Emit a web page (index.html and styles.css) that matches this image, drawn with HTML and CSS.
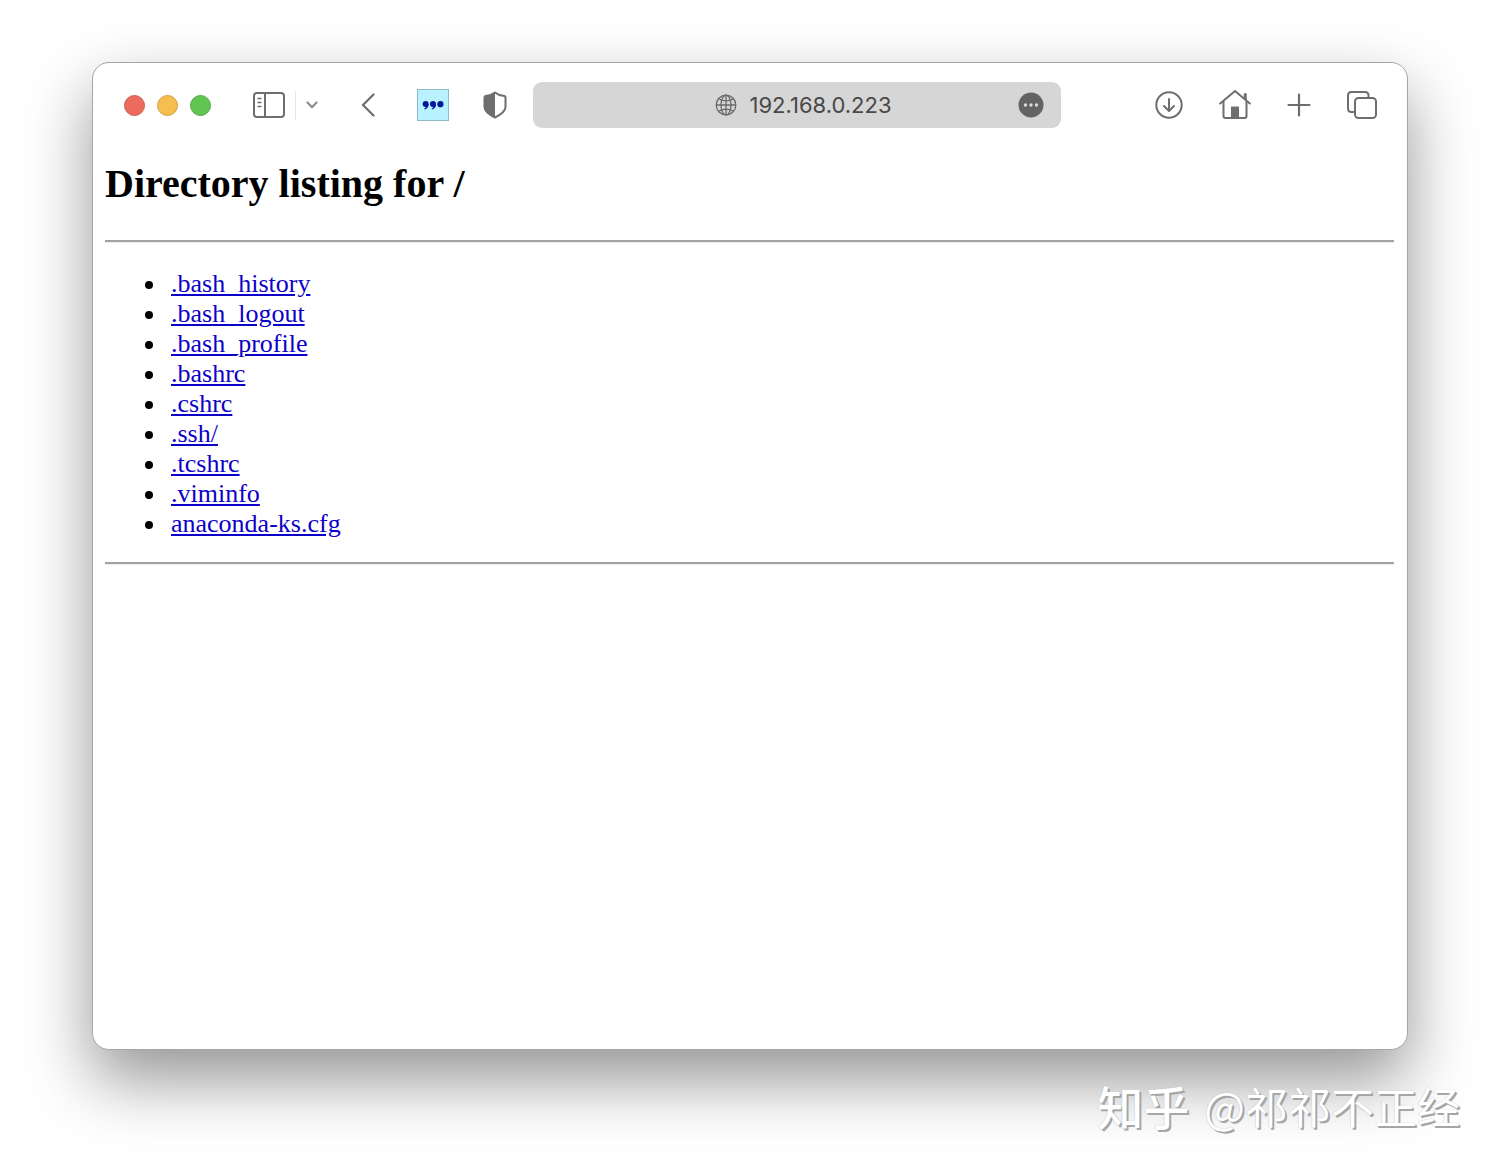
FILE: index.html
```html
<!DOCTYPE html>
<html lang="en">
<head>
<meta charset="utf-8">
<title>Directory listing for /</title>
<link rel="stylesheet" href="styles.css">
</head>
<body>
<div class="window">
  <header class="toolbar">
    <div class="lights">
      <button class="light light-close" aria-label="Close"></button>
      <button class="light light-min" aria-label="Minimize"></button>
      <button class="light light-zoom" aria-label="Zoom"></button>
    </div>
    <div class="sidebar-tools">
      <button class="tool" aria-label="Sidebar">
        <svg width="32" height="26" viewBox="0 0 32 26" fill="none" stroke="currentColor" stroke-width="2"><rect x="1" y="1" width="30" height="24" rx="3"/><path d="M12 1v24"/><path d="M4.500 6.500h4M4.500 10.500h4M4.500 14.500h4" stroke-width="1.500"/></svg>
      </button>
      <span class="divider"></span>
      <button class="tool" aria-label="Tab groups">
        <svg width="12" height="8" viewBox="0 0 12 8" fill="none" stroke="#8e8e8e" stroke-width="2.200" stroke-linecap="round" stroke-linejoin="round"><path d="M1.500 1.500 6 6.200l4.500-4.700"/></svg>
      </button>
    </div>
    <button class="tool tool-back" aria-label="Back">
      <svg width="14" height="24" viewBox="0 0 14 24" fill="none" stroke="currentColor" stroke-width="2.200" stroke-linecap="round" stroke-linejoin="round"><path d="M12.500 1.500 2 12l10.500 10.500"/></svg>
    </button>
    <div class="extensions">
      <button class="tool tool-quotes" aria-label="Comma extension">
        <svg width="22" height="10" viewBox="0 0 22 10" fill="#06189a"><circle cx="3.600" cy="4" r="3"/><path d="M6.600 4C6.800 6.800 5.200 9 2.600 9.600L2.300 8.600C3.600 8 4 7.200 3.800 6z"/><circle cx="11" cy="4" r="3"/><path d="M14 4c.2 2.800-1.400 5-4 5.600L9.700 8.600c1.300-.6 1.700-1.400 1.500-2.600z"/><circle cx="18.400" cy="4.200" r="3.100"/></svg>
      </button>
      <button class="tool" aria-label="Privacy report">
        <svg width="24" height="28" viewBox="0 0 24 28" stroke="currentColor" stroke-width="2" stroke-linejoin="round" fill="none"><path d="M12 1.500C9.500 3.600 5.500 4.800 2.600 5.100 1.800 5.200 1.500 5.600 1.500 6.300V16c0 5 5.500 8 10.500 10.500C17 24 22.500 21 22.500 16V6.300c0-.7-.3-1.100-1.100-1.200C18.500 4.800 14.500 3.600 12 1.500z"/><path d="M12 1.500C9.500 3.600 5.500 4.800 2.600 5.100 1.800 5.200 1.500 5.600 1.500 6.300V16c0 5 5.500 8 10.500 10.500z" fill="currentColor" stroke="none"/></svg>
      </button>
    </div>
    <div class="address">
      <label class="site" for="url">
        <svg width="22" height="22" viewBox="0 0 22 22" fill="none" stroke="#6a6a6a" stroke-width="1.300"><circle cx="11" cy="11" r="9.800"/><ellipse cx="11" cy="11" rx="5" ry="9.800"/><path d="M11 1v20M1 11h20M3.500 4.800c4.500 2.500 10.500 2.500 15 0M3.500 17.200c4.500-2.500 10.500-2.500 15 0"/></svg>
      </label>
      <input class="url" id="url" type="text" value="192.168.0.223" aria-label="Address">
      <button class="tool more" aria-label="Page menu">
        <svg width="26" height="26" viewBox="0 0 26 26"><circle cx="13" cy="13" r="12.500" fill="#636363"/><g fill="#dcdcdc"><circle cx="7.500" cy="13" r="1.700"/><circle cx="13" cy="13" r="1.700"/><circle cx="18.500" cy="13" r="1.700"/></g></svg>
      </button>
    </div>
    <nav class="actions">
      <button class="tool" aria-label="Downloads">
        <svg width="28" height="28" viewBox="0 0 28 28" fill="none" stroke="currentColor" stroke-width="2" stroke-linecap="round" stroke-linejoin="round"><circle cx="14" cy="14" r="12.700"/><path d="M14 8v11.500M9 15l5 5 5-5"/></svg>
      </button>
      <button class="tool" aria-label="Home">
        <svg width="32" height="30" viewBox="0 0 32 30" fill="none" stroke="currentColor" stroke-width="2" stroke-linecap="round" stroke-linejoin="round"><path d="M1.200 13.500 16 1l14.800 12.500"/><path d="M4.500 11.500V26c0 1.200.7 2 2 2h19c1.300 0 2-.8 2-2V11.500"/><path d="M25.500 4h1.500v6l-1.500-1.300z" fill="currentColor" stroke-width="1.500"/><path d="M12 16.500h8V28h-8z" fill="currentColor" stroke="none"/></svg>
      </button>
      <button class="tool" aria-label="New tab">
        <svg width="24" height="24" viewBox="0 0 24 24" fill="none" stroke="currentColor" stroke-width="2.200" stroke-linecap="round"><path d="M12 1.500v21M1.500 12h21"/></svg>
      </button>
      <button class="tool" aria-label="Tab overview">
        <svg width="30" height="28" viewBox="0 0 30 28" fill="none" stroke="currentColor" stroke-width="2"><path d="M8 21H4.500C2.500 21 1 19.500 1 17.500v-13C1 2.500 2.500 1 4.500 1h13.500c2 0 3.500 1.500 3.500 3.500v2.500"/><rect x="8" y="7" width="21" height="20" rx="3.500"/></svg>
      </button>
    </nav>
  </header>
  <main class="page">
    <h1 class="title">Directory listing for /</h1>
    <hr class="rule">
    <ul class="files">
      <li><a href="#">.bash_history</a></li>
      <li><a href="#">.bash_logout</a></li>
      <li><a href="#">.bash_profile</a></li>
      <li><a href="#">.bashrc</a></li>
      <li><a href="#">.cshrc</a></li>
      <li><a href="#">.ssh/</a></li>
      <li><a href="#">.tcshrc</a></li>
      <li><a href="#">.viminfo</a></li>
      <li><a href="#">anaconda-ks.cfg</a></li>
    </ul>
    <hr class="rule">
  </main>
</div>
<footer class="credit" lang="zh-CN"><span class="credit-site">知乎</span><span>@祁祁不正经</span></footer>
</body>
</html>
```
FILE: styles.css
```css
* {
  box-sizing: border-box;
}

body {
  margin: 0;
  min-height: 100vh;
  display: flex;
  flex-direction: column;
  padding: 62px 92px 0;
  background: #fff;
  overflow-x: hidden;
}

.window {
  flex: 1;
  border: 1px solid #a6a6a6;
  border-radius: 17px;
  background: #fff;
  box-shadow: 0 30px 66px rgba(0, 0, 0, 0.42);
}

.toolbar {
  display: flex;
  align-items: center;
  height: 84px;
  padding: 0 30px 0 31px;
  color: #6e6e6e;
}

.lights {
  display: flex;
  gap: 12px;
}

.light {
  width: 21px;
  height: 21px;
  padding: 0;
  border: 1px solid;
  border-radius: 50%;
}

.light-close {
  background: #ec6a5e;
  border-color: #cf5b51;
}

.light-min {
  background: #f5bf4f;
  border-color: #cfa044;
}

.light-zoom {
  background: #61c554;
  border-color: #53a748;
}

.tool {
  display: flex;
  padding: 0;
  border: 0;
  background: none;
  color: inherit;
}

.tool svg {
  display: block;
}

.sidebar-tools {
  display: flex;
  align-items: center;
  gap: 10px;
  margin-left: 42px;
}

.divider {
  width: 1px;
  height: 29px;
  background: #e6e6e6;
}

.tool-back {
  margin-left: 43px;
}

.extensions {
  display: flex;
  align-items: center;
  gap: 34px;
  margin: 0 26px 0 42px;
}

.tool-quotes {
  width: 32px;
  height: 32px;
  align-items: center;
  justify-content: center;
  border: 1px solid #8fb9c6;
  background: #b8f1ff;
}

.address {
  position: relative;
  flex: 1;
  display: flex;
  align-items: center;
  justify-content: center;
  gap: 13px;
  height: 46px;
  padding-left: 14px;
  border-radius: 9px;
  background: #d6d6d6;
}

.site {
  display: flex;
}

.url {
  width: 144px;
  padding: 0;
  border: 0;
  background: none;
  color: #484848;
  font: 22px Inter, sans-serif;
}

.more {
  position: absolute;
  right: 17px;
}

.actions {
  display: flex;
  align-items: center;
  gap: 36px;
  margin-left: 94px;
}

.page {
  padding: 0 13px 16px 12px;
  font: 26px/30px "Liberation Serif", serif;
  color: #000;
}

.title {
  margin: 14px 0 33px;
  font-size: 40px;
  line-height: 46px;
}

.rule {
  height: 3px;
  margin: 0;
  border: solid;
  border-width: 2px 0 1px;
  border-color: #a2a2a2 #eee #eee;
}

.files {
  margin: 26px 0 23px;
  padding-left: 62px;
}

.files li {
  padding-left: 4px;
}

.files a {
  color: #0d00c8;
}

.credit {
  display: flex;
  justify-content: flex-end;
  align-items: center;
  gap: 15px;
  height: 121px;
  margin-right: -52px;
  padding-bottom: 12px;
  color: #fff;
  font: 43px "Noto Sans CJK SC", sans-serif;
  text-shadow: 0 0 1px #aaa, 2px 2px 0 #a6a6a6;
  z-index: 1;
}

.credit-site {
  font-size: 46px;
  font-weight: 500;
}
```
